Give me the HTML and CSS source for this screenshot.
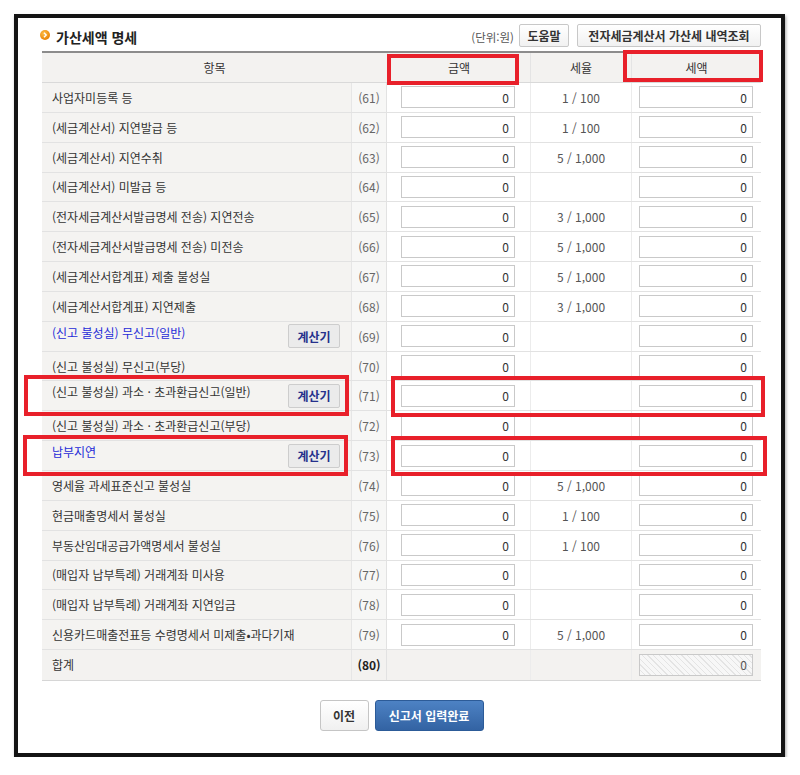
FILE: index.html
```html
<!DOCTYPE html>
<html lang="ko">
<head>
<meta charset="utf-8">
<title>가산세액 명세</title>
<link rel="stylesheet" href="styles.css">
</head>
<body>
<div class="frame">
  <div class="head">
    <h2 class="title"><svg class="dot" width="10" height="10" viewBox="0 0 10 10"><defs><radialGradient id="og" cx="40%" cy="35%" r="70%"><stop offset="0" stop-color="#ffc04a"/><stop offset="1" stop-color="#e77d00"/></radialGradient></defs><circle cx="5" cy="5" r="5" fill="url(#og)"/><path d="M4 2.8 L6.2 5 L4 7.2" fill="none" stroke="#fff" stroke-width="1.4"/></svg>가산세액 명세</h2>
    <div class="tools"><span class="unit">(단위:원)</span><button class="btn btn-help">도움말</button><button class="btn btn-query">전자세금계산서 가산세 내역조회</button></div>
  </div>

  <div class="grid">
    <div class="row hrow"><div class="h h-item">항목</div><div class="h">금액</div><div class="h h-rate">세율</div><div class="h">세액</div></div>

    <div class="row"><div class="lb">사업자미등록 등</div><div class="nm">(61)</div><div class="amt"><input class="inp" value="0"></div><div class="rt">1 / 100</div><div class="tx"><input class="inp" value="0"></div></div>
    <div class="row"><div class="lb">(세금계산서) 지연발급 등</div><div class="nm">(62)</div><div class="amt"><input class="inp" value="0"></div><div class="rt">1 / 100</div><div class="tx"><input class="inp" value="0"></div></div>
    <div class="row"><div class="lb">(세금계산서) 지연수취</div><div class="nm">(63)</div><div class="amt"><input class="inp" value="0"></div><div class="rt">5 / 1,000</div><div class="tx"><input class="inp" value="0"></div></div>
    <div class="row"><div class="lb">(세금계산서) 미발급 등</div><div class="nm">(64)</div><div class="amt"><input class="inp" value="0"></div><div class="rt"></div><div class="tx"><input class="inp" value="0"></div></div>
    <div class="row"><div class="lb">(전자세금계산서발급명세 전송) 지연전송</div><div class="nm">(65)</div><div class="amt"><input class="inp" value="0"></div><div class="rt">3 / 1,000</div><div class="tx"><input class="inp" value="0"></div></div>
    <div class="row"><div class="lb">(전자세금계산서발급명세 전송) 미전송</div><div class="nm">(66)</div><div class="amt"><input class="inp" value="0"></div><div class="rt">5 / 1,000</div><div class="tx"><input class="inp" value="0"></div></div>
    <div class="row"><div class="lb">(세금계산서합계표) 제출 불성실</div><div class="nm">(67)</div><div class="amt"><input class="inp" value="0"></div><div class="rt">5 / 1,000</div><div class="tx"><input class="inp" value="0"></div></div>
    <div class="row"><div class="lb">(세금계산서합계표) 지연제출</div><div class="nm">(68)</div><div class="amt"><input class="inp" value="0"></div><div class="rt">3 / 1,000</div><div class="tx"><input class="inp" value="0"></div></div>
    <div class="row"><div class="lb"><span class="lt blue">(신고 불성실) 무신고(일반)</span><button class="calc">계산기</button></div><div class="nm">(69)</div><div class="amt"><input class="inp" value="0"></div><div class="rt"></div><div class="tx"><input class="inp" value="0"></div></div>
    <div class="row"><div class="lb">(신고 불성실) 무신고(부당)</div><div class="nm">(70)</div><div class="amt"><input class="inp" value="0"></div><div class="rt"></div><div class="tx"><input class="inp" value="0"></div></div>
    <div class="row"><div class="lb"><span class="lt">(신고 불성실) 과소 · 초과환급신고(일반)</span><button class="calc">계산기</button></div><div class="nm">(71)</div><div class="amt"><input class="inp" value="0"></div><div class="rt"></div><div class="tx"><input class="inp" value="0"></div></div>
    <div class="row"><div class="lb">(신고 불성실) 과소 · 초과환급신고(부당)</div><div class="nm">(72)</div><div class="amt"><input class="inp" value="0"></div><div class="rt"></div><div class="tx"><input class="inp" value="0"></div></div>
    <div class="row"><div class="lb"><span class="lt blue">납부지연</span><button class="calc">계산기</button></div><div class="nm">(73)</div><div class="amt"><input class="inp" value="0"></div><div class="rt"></div><div class="tx"><input class="inp" value="0"></div></div>
    <div class="row"><div class="lb">영세율 과세표준신고 불성실</div><div class="nm">(74)</div><div class="amt"><input class="inp" value="0"></div><div class="rt">5 / 1,000</div><div class="tx"><input class="inp" value="0"></div></div>
    <div class="row"><div class="lb">현금매출명세서 불성실</div><div class="nm">(75)</div><div class="amt"><input class="inp" value="0"></div><div class="rt">1 / 100</div><div class="tx"><input class="inp" value="0"></div></div>
    <div class="row"><div class="lb">부동산임대공급가액명세서 불성실</div><div class="nm">(76)</div><div class="amt"><input class="inp" value="0"></div><div class="rt">1 / 100</div><div class="tx"><input class="inp" value="0"></div></div>
    <div class="row"><div class="lb">(매입자 납부특례) 거래계좌 미사용</div><div class="nm">(77)</div><div class="amt"><input class="inp" value="0"></div><div class="rt"></div><div class="tx"><input class="inp" value="0"></div></div>
    <div class="row"><div class="lb">(매입자 납부특례) 거래계좌 지연입금</div><div class="nm">(78)</div><div class="amt"><input class="inp" value="0"></div><div class="rt"></div><div class="tx"><input class="inp" value="0"></div></div>
    <div class="row"><div class="lb">신용카드매출전표등 수령명세서 미제출•과다기재</div><div class="nm">(79)</div><div class="amt"><input class="inp" value="0"></div><div class="rt">5 / 1,000</div><div class="tx"><input class="inp" value="0"></div></div>
    <div class="row sum"><div class="lb">합계</div><div class="nm nm-sum">(80)</div><div class="amt"></div><div class="rt"></div><div class="tx"><input class="inp inp-ro" value="0" readonly></div></div>
  </div>

  <div class="actions"><button class="act act-prev">이전</button><button class="act act-done">신고서 입력완료</button></div>

  <div class="mark m1"></div>
  <div class="mark m2"></div>
  <div class="mark m3"></div>
  <div class="mark m4"></div>
  <div class="mark m5"></div>
  <div class="mark m6"></div>
</div>
</body>
</html>
```

FILE: styles.css
```css
* { box-sizing: border-box; }
body {
  margin: 0;
  background: #fff;
  font-family: "Noto Sans CJK KR", "Noto Sans", sans-serif;
  font-size: 12px;
  color: #333;
}
.frame {
  position: relative;
  margin: 14px 0 0 14px;
  width: 771px;
  height: 743px;
  border: 4px solid #141414;
  background: #fff;
  padding: 6px 20px 0 24px;
  box-shadow: 1px 2px 3px rgba(0, 0, 0, 0.35);
}
.head {
  display: flex;
  align-items: center;
  justify-content: space-between;
  height: 23px;
  margin-bottom: 4px;
}
.title {
  margin: 0 0 0 -2px;
  padding-top: 3px;
  display: flex;
  align-items: center;
  gap: 6px;
  font-size: 14px;
  line-height: 16px;
  font-weight: bold;
  color: #222;
}
.dot { margin-top: -5px; }
.tools { display: flex; align-items: center; }
.unit { color: #555; font-size: 11.5px; margin-right: 5px; padding-top: 2px; }
.btn {
  height: 23px;
  padding: 0;
  border: 1px solid #c8c8c8;
  border-radius: 2px;
  background: linear-gradient(#ffffff, #f1f1f1);
  font-family: inherit;
  font-size: 12px;
  font-weight: bold;
  color: #333;
}
.btn-help { width: 50px; }
.btn-query { width: 184px; margin-left: 8px; }

.grid { width: 719px; border-bottom: 1px solid #d6d6d6; }
.row {
  display: grid;
  grid-template-columns: 309px 36px 143px 101px 130px;
  height: 29.85px;
  border-bottom: 1px solid #e2e2e2;
}
.row:last-child { border-bottom: 0; }
.hrow {
  grid-template-columns: 345px 143px 101px 130px;
  height: 32px;
  border-top: 2px solid #8c8c8c;
  border-bottom: 1px solid #d9d9d9;
  background: #f3f2f0;
}
.h {
  display: flex;
  align-items: center;
  justify-content: center;
  color: #333;
  border-left: 1px solid #e4e4e4;
}
.h-item { border-left: 0; }

.lb {
  display: flex;
  align-items: center;
  justify-content: space-between;
  padding: 0 11px 0 10px;
  background: #f4f3f1;
  color: #333;
  white-space: nowrap;
}
.lt { margin-bottom: 8px; }
.blue { color: #1f2bd8; }
.calc {
  width: 52px;
  height: 24px;
  padding: 0;
  border: 1px solid #cdcdcd;
  border-radius: 2px;
  background: #ebebeb;
  font-family: inherit;
  font-size: 12px;
  font-weight: bold;
  color: #26318c;
}
.nm {
  display: flex;
  align-items: center;
  justify-content: center;
  background: #f7f7f6;
  color: #666;
  font-size: 12px;
  border-left: 1px solid #e6e6e6;
  border-right: 1px solid #e2e2e2;
}
.nm-sum { color: #222; font-weight: bold; }
.amt, .tx { display: flex; align-items: center; }
.amt { padding-left: 14px; }
.tx { padding-left: 7px; border-left: 1px solid #ececec; }
.rt {
  display: flex;
  align-items: center;
  justify-content: center;
  color: #555;
  font-size: 12px;
  border-left: 1px solid #ececec;
}
.inp {
  width: 114px;
  height: 22px;
  padding: 0 5px 0 4px;
  border: 1px solid #c9c9c9;
  background: #fff;
  text-align: right;
  font-family: inherit;
  font-size: 12px;
  color: #333;
}
.sum > div { background: #f3f2f0; }
.inp-ro {
  background: repeating-linear-gradient(45deg, #f7f7f7 0, #f7f7f7 3px, #e4e4e4 3px, #e4e4e4 4px);
  color: #555;
}

.actions {
  display: flex;
  justify-content: center;
  gap: 6px;
  margin-top: 19px;
  width: 719px;
}
.act {
  height: 31px;
  padding: 0;
  border-radius: 3px;
  font-family: inherit;
  font-size: 12px;
  font-weight: bold;
}
.act-prev {
  width: 49px;
  border: 1px solid #c5c5c5;
  background: linear-gradient(#ffffff, #f0f0f0);
  color: #333;
}
.act-done {
  width: 109px;
  border: 1px solid #2c5b98;
  background: linear-gradient(#4d82c4, #3363a3);
  color: #fff;
}

.mark {
  position: absolute;
  border: 4px solid #e8202a;
}
.m1 { left: 369px; top: 36px; width: 132px; height: 31px; }
.m2 { left: 605px; top: 32px; width: 140px; height: 32px; }
.m3 { left: 6px; top: 357px; width: 325px; height: 41px; }
.m4 { left: 373px; top: 358px; width: 374px; height: 41px; }
.m5 { left: 5px; top: 417px; width: 325px; height: 41px; }
.m6 { left: 373px; top: 418px; width: 376px; height: 40px; }
```
